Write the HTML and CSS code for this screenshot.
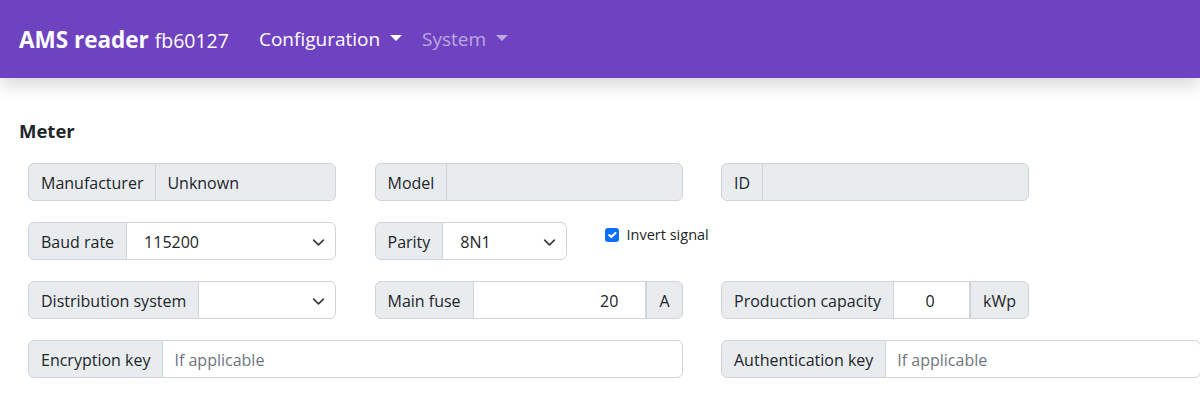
FILE: index.html
```html
<!DOCTYPE html>
<html lang="en">
<head>
    <meta charset="UTF-8">
    <meta name="viewport" content="width=device-width, initial-scale=1.0">
    <title>AMS reader - Configuration</title>
    <link rel="stylesheet" href="styles.css">
</head>
<body>
    <nav class="navbar">
        <div class="brand">AMS reader <small>fb60127</small></div>
        <ul class="nav-menu">
            <li class="nav-item">Configuration <span class="caret"></span></li>
            <li class="nav-item disabled">System <span class="caret"></span></li>
        </ul>
    </nav>

    <main class="page">
        <h5 class="section-title">Meter</h5>

        <div class="form-grid">
            <!-- row 1 -->
            <div class="input-group">
                <span class="addon">Manufacturer</span>
                <span class="field readonly">Unknown</span>
            </div>
            <div class="input-group">
                <span class="addon">Model</span>
                <span class="field readonly"></span>
            </div>
            <div class="input-group">
                <span class="addon">ID</span>
                <span class="field readonly"></span>
            </div>
            <div></div>

            <!-- row 2 -->
            <div class="input-group">
                <span class="addon">Baud rate</span>
                <span class="field select">115200
                    <svg class="chevron" viewBox="0 0 16 16"><path d="M2 5l6 6 6-6" fill="none" stroke="#343a40" stroke-width="2" stroke-linecap="round" stroke-linejoin="round"/></svg>
                </span>
            </div>
            <div class="parity-cell">
                <div class="input-group parity">
                    <span class="addon">Parity</span>
                    <span class="field select">8N1
                        <svg class="chevron" viewBox="0 0 16 16"><path d="M2 5l6 6 6-6" fill="none" stroke="#343a40" stroke-width="2" stroke-linecap="round" stroke-linejoin="round"/></svg>
                    </span>
                </div>
                <label class="form-check">
                    <span class="check-box">
                        <svg viewBox="0 0 20 20"><path d="M6 10l3 3 6-6" fill="none" stroke="#fff" stroke-width="3" stroke-linecap="round" stroke-linejoin="round"/></svg>
                    </span>
                    Invert signal
                </label>
            </div>
            <div></div>
            <div></div>

            <!-- row 3 -->
            <div class="input-group">
                <span class="addon">Distribution system</span>
                <span class="field select">
                    <svg class="chevron" viewBox="0 0 16 16"><path d="M2 5l6 6 6-6" fill="none" stroke="#343a40" stroke-width="2" stroke-linecap="round" stroke-linejoin="round"/></svg>
                </span>
            </div>
            <div class="input-group">
                <span class="addon">Main fuse</span>
                <span class="field num-right">20</span>
                <span class="addon">A</span>
            </div>
            <div class="input-group">
                <span class="addon">Production capacity</span>
                <span class="field num-center">0</span>
                <span class="addon">kWp</span>
            </div>
            <div></div>

            <!-- row 4 -->
            <div class="input-group span-2">
                <span class="addon">Encryption key</span>
                <span class="field placeholder">If applicable</span>
            </div>
            <div class="input-group span-2">
                <span class="addon">Authentication key</span>
                <span class="field placeholder">If applicable</span>
            </div>
        </div>
    </main>
</body>
</html>
```

FILE: styles.css
```css
* {
    margin: 0;
    padding: 0;
    box-sizing: border-box;
}

body {
    font-family: 'Segoe UI', 'Open Sans', 'Noto Sans', sans-serif;
    font-size: 16px;
    color: #212529;
    background: #fff;
    overflow: hidden;
    width: 1200px;
    height: 397px;
}

.navbar {
    background: #6f42c1;
    height: 78px;
    display: flex;
    align-items: center;
    padding: 0 19px;
    box-shadow: 0 8px 16px rgba(0,0,0,0.15);
    position: relative;
    z-index: 1;
}

.brand {
    color: #fff;
    font-size: 22.5px;
    font-weight: 700;
    margin-right: 30px;
    white-space: nowrap;
}

.brand small {
    font-size: 19.5px;
    font-weight: 400;
}

.nav-menu {
    list-style: none;
    display: flex;
    gap: 20px;
}

.nav-item {
    color: #fff;
    font-size: 19px;
    display: flex;
    align-items: center;
    gap: 10px;
}

.nav-item.disabled {
    color: rgba(255,255,255,0.55);
}

.caret {
    width: 0;
    height: 0;
    border-left: 6px solid transparent;
    border-right: 6px solid transparent;
    border-top: 6px solid currentColor;
    margin-top: -2px;
}

.page {
    padding: 0 0 0 19px;
    background: #fff;
    overflow: hidden;
}

.section-title {
    font-size: 18.5px;
    font-weight: 700;
    padding-top: 40px;
    height: 85px;
}

.form-grid {
    display: grid;
    grid-template-columns: 308px 308px 308px 1fr;
    column-gap: 38.5px;
    row-gap: 21px;
    margin-left: 9px;
    width: 1173px;
}

.span-2 {
    grid-column: span 2;
}

.input-group {
    display: flex;
    height: 38px;
}

.addon {
    background: #e9ecef;
    border: 1px solid #ced4da;
    padding: 1px 12px 0;
    display: flex;
    align-items: center;
    white-space: nowrap;
}

.field {
    flex: 1;
    border: 1px solid #ced4da;
    margin-left: -1px;
    padding: 1px 11px 0;
    display: flex;
    align-items: center;
    background: #fff;
    color: #212529;
    position: relative;
    white-space: nowrap;
}

.input-group > :first-child {
    border-radius: 6px 0 0 6px;
}

.input-group > :last-child {
    border-radius: 0 6px 6px 0;
}

.field.readonly {
    background: #e9ecef;
}

.field.select {
    padding-left: 17px;
}

.chevron {
    position: absolute;
    right: 10px;
    top: 13px;
    width: 13px;
    height: 13px;
}

.field.num-right {
    justify-content: flex-end;
    padding-right: 27px;
}

.field.num-center {
    justify-content: center;
    padding-right: 14px;
}

.field.placeholder {
    color: #6c757d;
}

.parity-cell {
    display: flex;
    align-items: flex-start;
}

.parity {
    width: 192px;
    flex-shrink: 0;
}

.form-check {
    display: flex;
    align-items: center;
    gap: 8px;
    margin-left: 38px;
    margin-top: 3px;
    font-size: 14.5px;
    white-space: nowrap;
}

.check-box {
    width: 14px;
    height: 14px;
    border-radius: 3px;
    background: #0d6efd;
    display: flex;
    flex-shrink: 0;
}

.check-box svg {
    width: 14px;
    height: 14px;
}
```
